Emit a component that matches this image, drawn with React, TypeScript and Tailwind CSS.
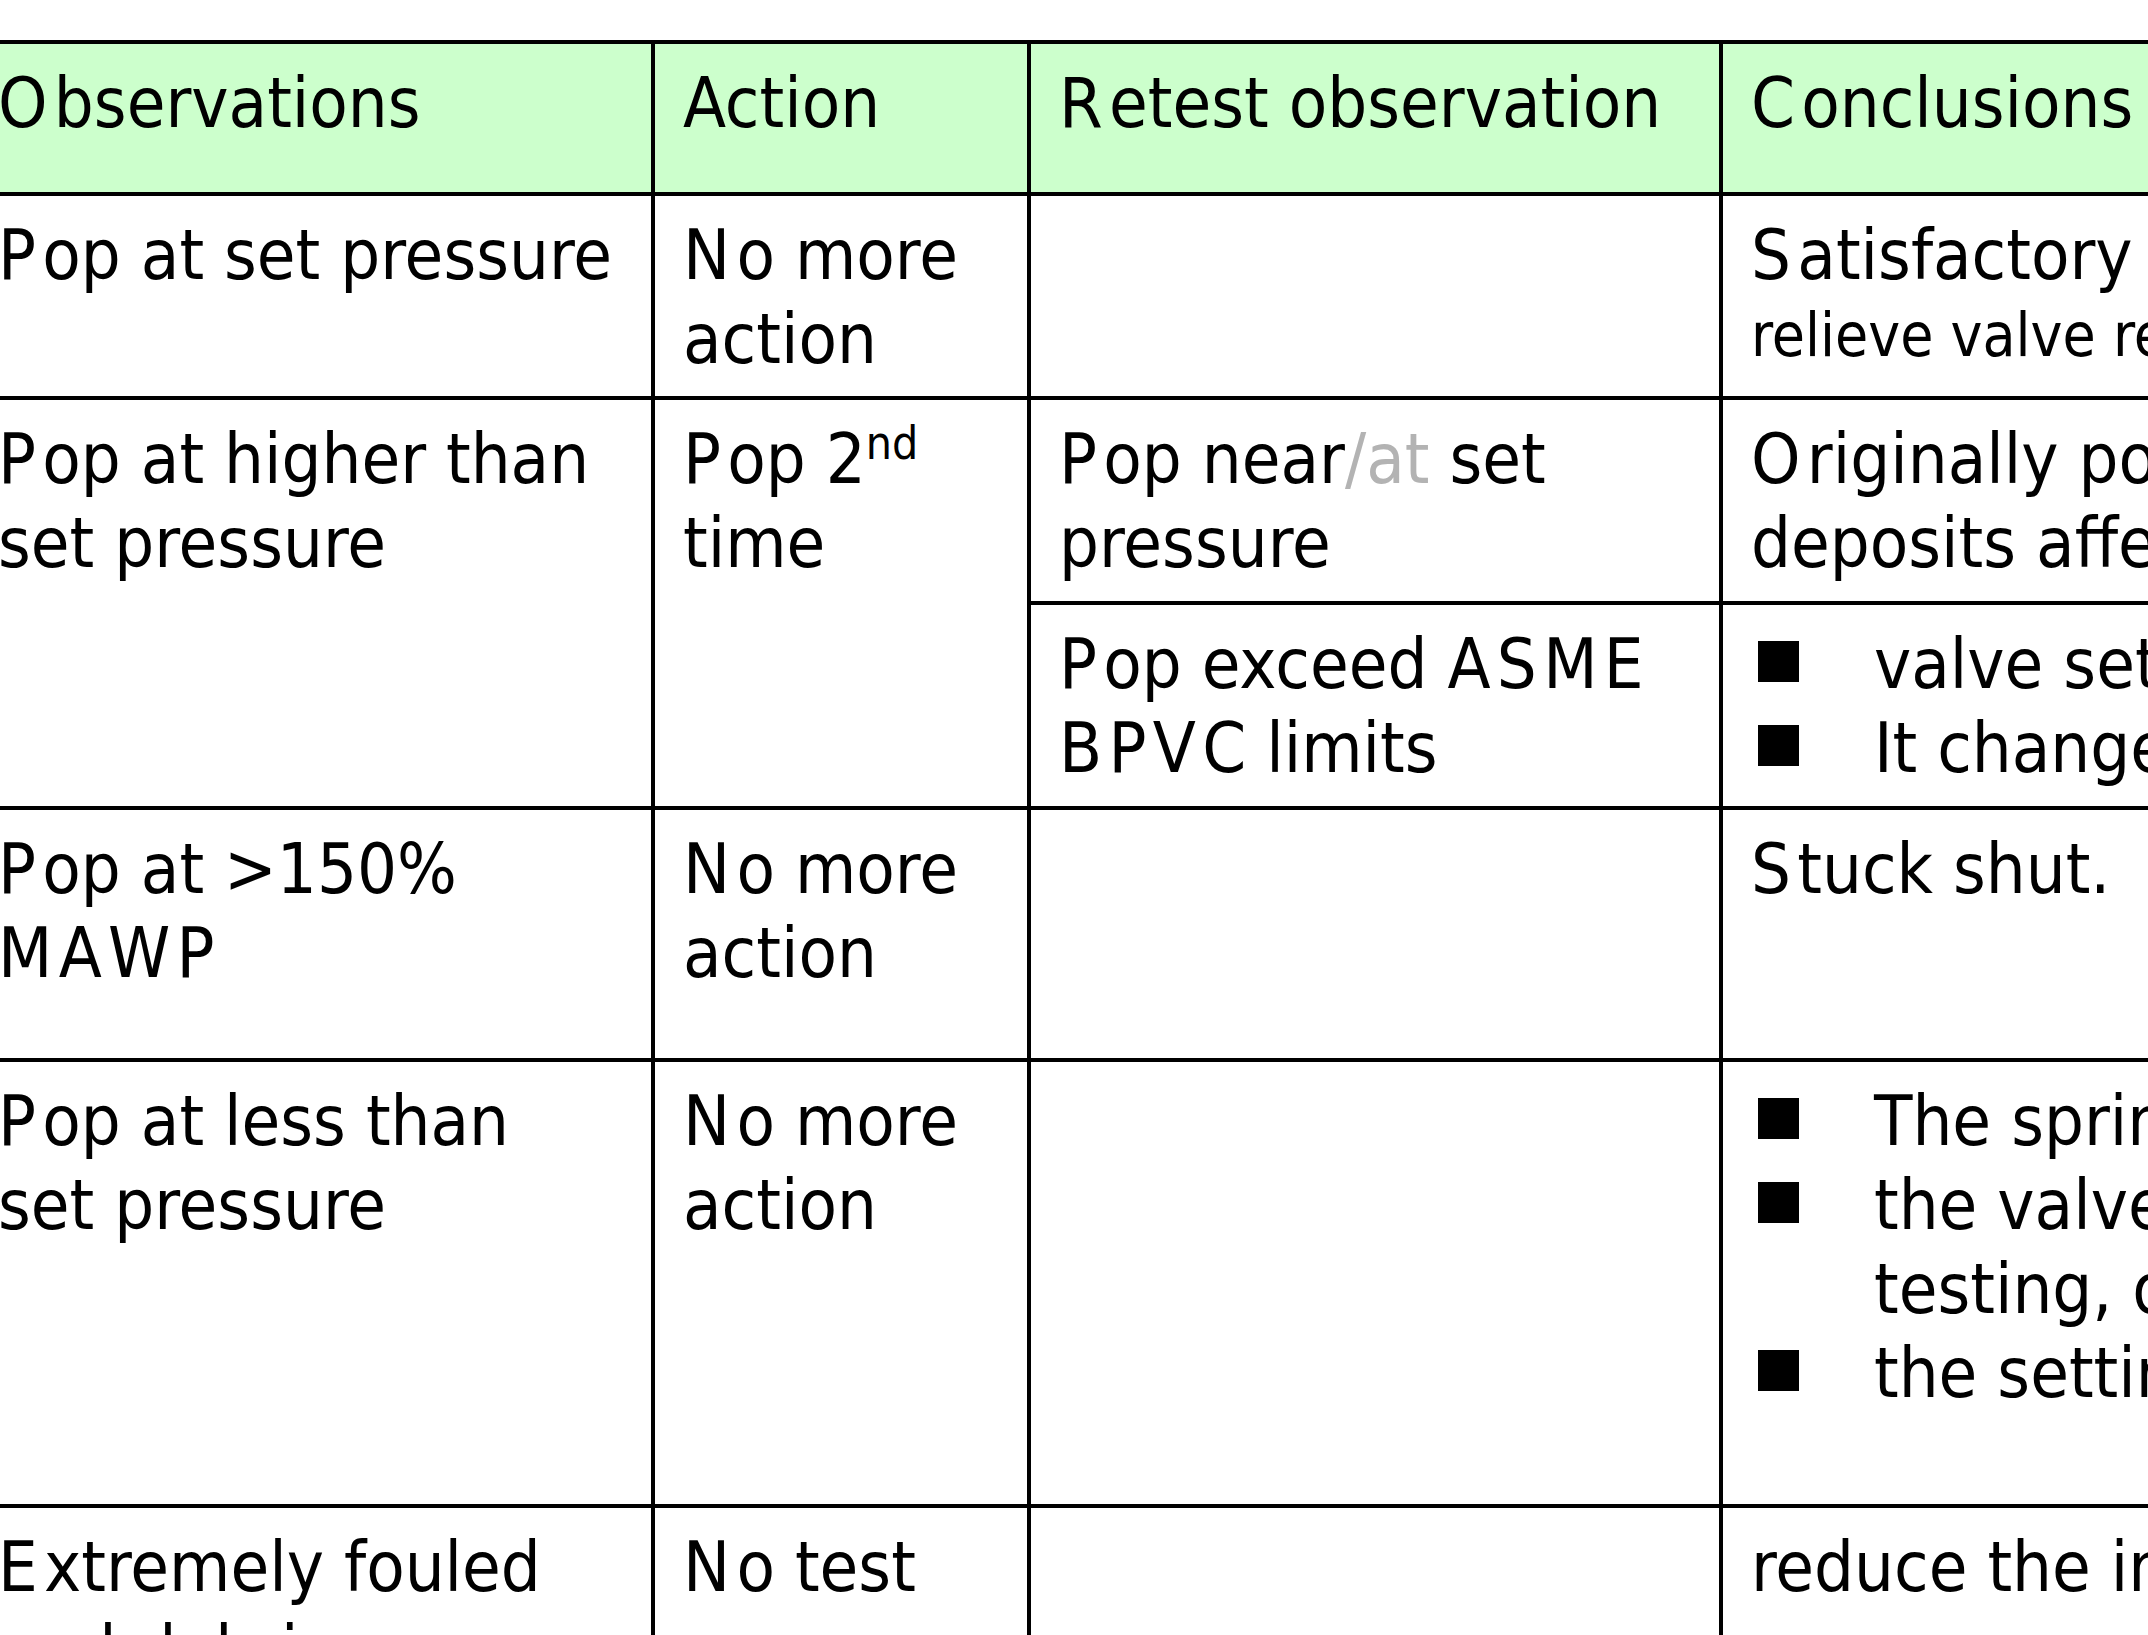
import type { ReactNode } from 'react';

// Wide capital: the source render leaves a gap after most capitals
function K({ children }: { children: ReactNode }) {
  return <span className="mr-[0.09em]">{children}</span>;
}

function Cell({ children, head, className }: { children?: ReactNode; head?: boolean; className?: string }) {
  return (
    <div className={`${head ? 'bg-[#ccffcc]' : 'bg-white'} overflow-hidden px-[28px] pt-[17px] ${className ?? ''}`}>
      {children}
    </div>
  );
}

function Bullet({ children }: { children: ReactNode }) {
  return (
    <div className="flex whitespace-nowrap">
      <div className="flex w-[123px] shrink-0 items-start">
        <span className="ml-[7px] mt-[19px] inline-block h-[41px] w-[41px] bg-black" />
      </div>
      <div>{children}</div>
    </div>
  );
}

export default function App() {
  return (
    <div className="h-screen w-full overflow-hidden bg-white text-black">
      <div className="ml-[-34px] mt-[40px] grid w-max grid-cols-[681px_372px_688px_800px] grid-rows-[148px_200px_201px_201px_248px_442px_200px] gap-[4px] bg-black p-[4px] font-['DejaVu_Sans_Condensed','DejaVu_Sans',sans-serif] text-[70px] leading-[84px] font-stretch-condensed">
        <Cell head>
          <K>O</K>bservations
        </Cell>
        <Cell head>Action</Cell>
        <Cell head>
          <K>R</K>etest observation
        </Cell>
        <Cell head>
          <K>C</K>onclusions
        </Cell>

        <Cell>
          <K>P</K>op at set pressure
        </Cell>
        <Cell>
          <K>N</K>o more action
        </Cell>
        <Cell />
        <Cell className="whitespace-nowrap">
          <div>
            <K>S</K>atisfactory
          </div>
          <div className="text-[60px] leading-[76px]">relieve valve remains in service</div>
        </Cell>

        <Cell className="row-span-2">
          <K>P</K>op at higher than set pressure
        </Cell>
        <Cell className="row-span-2">
          <K>P</K>op 2
          <sup className="-top-[24px] text-[46px]">nd</sup> time
        </Cell>
        <Cell>
          <K>P</K>op near<span className="text-[#b3b3b3]">/at</span> set pressure
        </Cell>
        <Cell className="whitespace-nowrap">
          <div>
            <K>O</K>riginally popped high because
          </div>
          <div>deposits affected the seat</div>
        </Cell>
        <Cell>
          <K>P</K>op exceed <K>A</K>
          <K>S</K>
          <K>M</K>E <K>B</K>
          <K>P</K>
          <K>V</K>C limits
        </Cell>
        <Cell>
          <Bullet>valve setting was wrong</Bullet>
          <Bullet>It changed during service</Bullet>
        </Cell>

        <Cell>
          <K>P</K>op at &gt;150% <K>M</K>
          <K>A</K>
          <K>W</K>P
        </Cell>
        <Cell>
          <K>N</K>o more action
        </Cell>
        <Cell />
        <Cell className="whitespace-nowrap">
          <K>S</K>tuck shut.
        </Cell>

        <Cell>
          <K>P</K>op at less than set pressure
        </Cell>
        <Cell>
          <K>N</K>o more action
        </Cell>
        <Cell />
        <Cell>
          <Bullet>The spring has weakened</Bullet>
          <Bullet>
            the valve was damaged during
            <br />
            testing, or
          </Bullet>
          <Bullet>the setting was changed</Bullet>
        </Cell>

        <Cell>
          <K>E</K>xtremely fouled and debris
        </Cell>
        <Cell>
          <K>N</K>o test
        </Cell>
        <Cell />
        <Cell className="whitespace-nowrap">reduce the inspection interval</Cell>
      </div>
    </div>
  );
}
